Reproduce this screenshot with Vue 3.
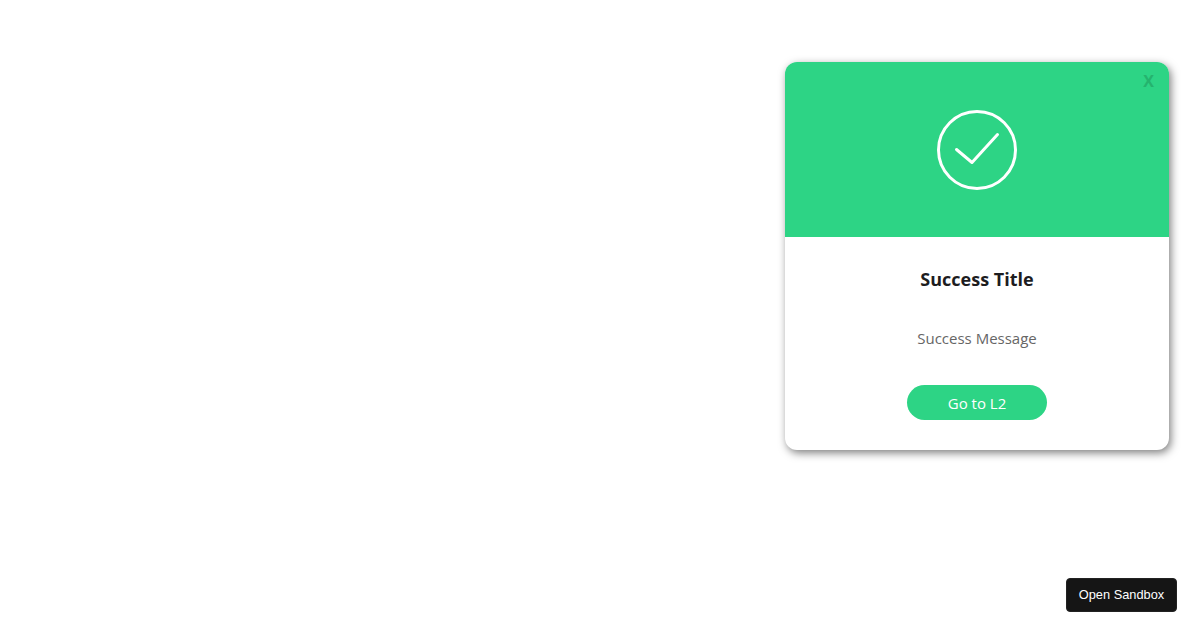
<script setup>
const title = 'Success Title'
const message = 'Success Message'
const action = 'Go to L2'
</script>

<template>
  <div class="page">
    <section class="card">
      <header class="head">
        <span class="close">X</span>
        <svg class="icon" width="80" height="80" viewBox="0 0 80 80" fill="none" stroke="#fff" stroke-linecap="round" stroke-linejoin="round">
          <circle cx="40" cy="40" r="38.5" stroke-width="3" />
          <path d="M19.5 39.5 L35 52.5 L60.5 24.5" stroke-width="3" />
        </svg>
      </header>
      <div class="body">
        <h2 class="title">{{ title }}</h2>
        <p class="message">{{ message }}</p>
        <button class="action" type="button">{{ action }}</button>
      </div>
    </section>
    <button class="sandbox" type="button">Open Sandbox</button>
  </div>
</template>

<style>
html, body { margin: 0; background: #fff; }
</style>

<style scoped>
.page {
  box-sizing: border-box;
  width: 1200px;
  height: 630px;
  overflow: hidden;
  display: flex;
  justify-content: flex-end;
  align-items: flex-start;
  padding: 62px 31px 0 0;
  font-family: "Open Sans", sans-serif;
}
.card {
  width: 384px;
  height: 388px;
  background: #fff;
  border-radius: 12px;
  box-shadow: 2px 3px 8px rgba(0, 0, 0, 0.5);
  overflow: hidden;
}
.head {
  position: relative;
  height: 175px;
  background: #2dd485;
  display: flex;
  justify-content: center;
  align-items: center;
  padding-top: 1px;
  box-sizing: border-box;
}
.close {
  position: absolute;
  top: 8px;
  right: 15px;
  font-size: 16px;
  line-height: 22px;
  font-weight: 700;
  color: #25b36e;
}
.icon { display: block; }
.body {
  display: flex;
  flex-direction: column;
  align-items: center;
  padding-top: 30px;
}
.title {
  margin: 0;
  font-size: 18px;
  line-height: 25px;
  font-weight: 700;
  color: #1d1d1f;
}
.message {
  margin: 36px 0 0;
  font-size: 15px;
  line-height: 20px;
  color: #666;
}
.action {
  margin-top: 37px;
  width: 140px;
  height: 35px;
  border: 0;
  border-radius: 18px;
  background: #2dd485;
  color: #fff;
  font-family: inherit;
  font-size: 15px;
  padding: 0;
}
.sandbox {
  position: fixed;
  right: 23px;
  bottom: 18px;
  width: 111px;
  height: 34px;
  border: 1px solid #222;
  border-radius: 4px;
  background: #151515;
  color: #fff;
  font-family: "Liberation Sans", Arial, sans-serif;
  font-size: 12.8px;
  line-height: 32px;
  padding: 0;
}
</style>
